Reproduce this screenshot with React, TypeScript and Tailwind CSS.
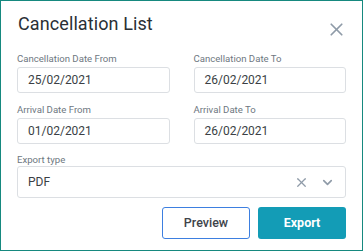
import { X, ChevronDown } from "lucide-react"

const fields = [
  [
    { label: "Cancellation Date From", value: "25/02/2021" },
    { label: "Cancellation Date To", value: "26/02/2021" },
  ],
  [
    { label: "Arrival Date From", value: "01/02/2021" },
    { label: "Arrival Date To", value: "26/02/2021" },
  ],
]

export default function App() {
  return (
    <div
      className="w-[363px] h-[251px] border border-[#16897f] bg-white px-[16px] relative"
      style={{ fontFamily: "Roboto, 'Noto Sans', sans-serif" }}
    >
      {/* Header */}
      <div className="flex items-center justify-between h-[24px] mt-[11px]">
        <h2 className="text-[18px] leading-[24px] text-[#2a2f35] font-normal ml-[1px] tracking-[0.1px]">Cancellation List</h2>
        <button className="text-[#8f9ba8] mr-[-1px] mt-[10px]">
          <X className="h-[21px] w-[21px]" strokeWidth={2} />
        </button>
      </div>

      {/* Date fields */}
      <div className="mt-[16px] flex flex-col gap-[10px]">
        {fields.map((row, i) => (
          <div key={i} className="grid grid-cols-2 gap-x-[24px]">
            {row.map((f) => (
              <div key={f.label}>
                <label className="block text-[9.6px] leading-[13px] text-[#6e7781] h-[15px]">{f.label}</label>
                <div className="h-[26px] border border-[#dcdfe3] rounded-[3px] flex items-center px-[10px] text-[12px] text-[#3a3f45]">
                  {f.value}
                </div>
              </div>
            ))}
          </div>
        ))}
      </div>

      {/* Export type */}
      <div className="mt-[9px]">
        <label className="block text-[9.6px] leading-[13px] text-[#6e7781] h-[13px]">Export type</label>
        <div className="h-[32px] border border-[#dcdfe3] rounded-[3px] flex items-center pl-[10px] pr-[10px] text-[12px] text-[#3a3f45]">
          <span className="flex-1">PDF</span>
          <X className="h-[15px] w-[15px] text-[#8f9ba8] mr-[11px]" strokeWidth={2} />
          <ChevronDown className="h-[15px] w-[15px] text-[#8f9ba8]" strokeWidth={2.6} />
        </div>
      </div>

      {/* Actions */}
      <div className="flex justify-end gap-[8px] mt-[9px]">
        <button className="w-[88px] h-[32px] border border-[#3d7fe0] rounded-[3px] text-[12.5px] font-medium text-[#3e444b] bg-white">
          Preview
        </button>
        <button className="w-[88px] h-[32px] rounded-[3px] bg-[#139cb6] text-[12.5px] font-bold text-white">
          Export
        </button>
      </div>
    </div>
  )
}
